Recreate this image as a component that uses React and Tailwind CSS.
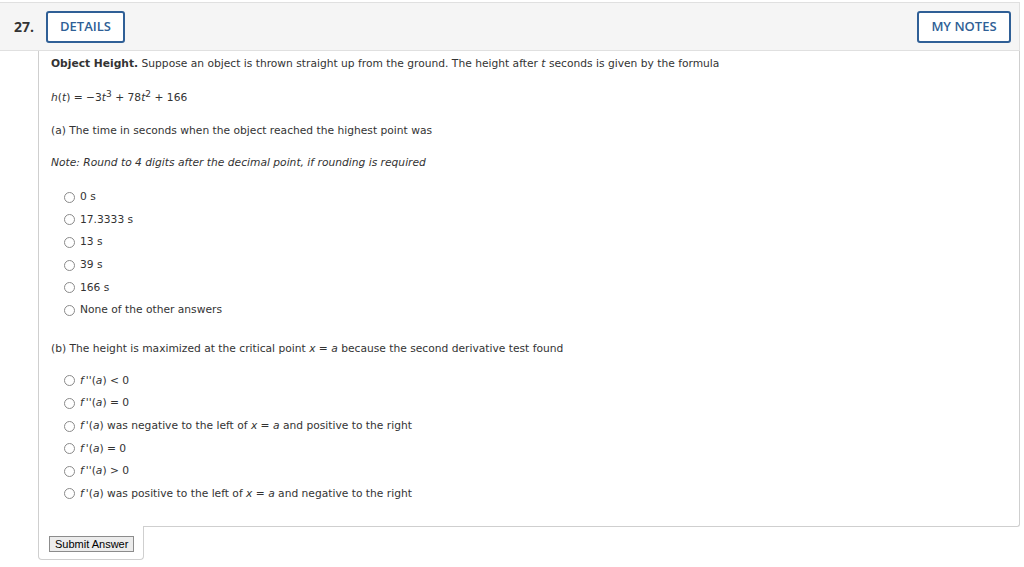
import React from 'react'

const body = { fontFamily: '"DejaVu Sans", Verdana, sans-serif' }

function Radio({ children }) {
  return (
    <label className="flex items-center h-[22.6px]">
      <span className="w-[11px] h-[11px] rounded-full border border-[#8a8a8a] bg-white shrink-0" />
      <span className="ml-[5px]">{children}</span>
    </label>
  )
}

const I = ({ children }) => <i>{children}</i>
const F = () => <i className="pr-[2px]">f</i>

export default function App() {
  const partA = ['0 s', '17.3333 s', '13 s', '39 s', '166 s', 'None of the other answers']
  const partB = [
    <><F />''(<I>a</I>) &lt; 0</>,
    <><F />''(<I>a</I>) = 0</>,
    <><F />'(<I>a</I>) was negative to the left of <I>x</I> = <I>a</I> and positive to the right</>,
    <><F />'(<I>a</I>) = 0</>,
    <><F />''(<I>a</I>) &gt; 0</>,
    <><F />'(<I>a</I>) was positive to the left of <I>x</I> = <I>a</I> and negative to the right</>,
  ]

  return (
    <div className="bg-white w-[1024px] h-[567px] overflow-hidden">
      {/* question header */}
      <div
        className="mt-[2px] w-[1020px] h-[49px] flex items-center justify-between bg-[#f5f5f5] border-t border-b border-r border-[#e0e0e0]"
        style={{ fontFamily: '"Open Sans", sans-serif' }}
      >
        <div className="flex items-center">
          <span className="ml-[14px] text-[14px] font-bold text-[#333]">27.</span>
          <button className="ml-[12px] w-[79px] h-[32px] rounded-[3px] border-2 border-[#2f5f96] bg-white text-[13px] font-semibold text-[#2f5f96]">
            DETAILS
          </button>
        </div>
        <button className="mr-[8px] w-[94px] h-[32px] rounded-[3px] border-2 border-[#2f5f96] bg-white text-[13px] font-semibold text-[#2f5f96]">
          MY NOTES
        </button>
      </div>

      {/* question body */}
      <div
        className="ml-[38px] w-[982px] h-[476px] border-l border-r border-b border-[#cfcfcf] rounded-br-[3px] pl-[12px] pt-[6px] text-[10.7px] text-[#333]"
        style={body}
      >
        <p className="leading-[14px]">
          <b>Object Height.</b> Suppose an object is thrown straight up from the ground. The height after <I>t</I> seconds is given by the formula
        </p>
        <p className="mt-[20px] leading-[14px]">
          <I>h</I>(<I>t</I>) = −3<I>t</I><sup className="text-[9px]">3</sup> + 78<I>t</I><sup className="text-[9px]">2</sup> + 166
        </p>
        <p className="mt-[19px] leading-[14px]">(a) The time in seconds when the object reached the highest point was</p>
        <p className="mt-[18px] leading-[14px] italic">Note: Round to 4 digits after the decimal point, if rounding is required</p>
        <div className="mt-[16px] ml-[13px]">
          {partA.map((t, i) => (
            <Radio key={i}>{t}</Radio>
          ))}
        </div>
        <p className="mt-[20px] leading-[14px]">
          (b) The height is maximized at the critical point <I>x</I> = <I>a</I> because the second derivative test found
        </p>
        <div className="mt-[14px] ml-[13px]">
          {partB.map((t, i) => (
            <Radio key={i}>{t}</Radio>
          ))}
        </div>
      </div>

      {/* submit tab */}
      <div className="ml-[38px] -mt-px w-[106px] h-[34px] bg-white border-l border-r border-b border-[#cfcfcf] rounded-b-[4px] pl-[10px] pt-[10px]">
        <button
          className="block h-[16px] px-[5px] bg-[#ececec] border border-[#8c8c8c] text-[11px] leading-[14px] text-black"
          style={{ fontFamily: '"Liberation Sans", Arial, sans-serif' }}
        >
          Submit Answer
        </button>
      </div>
    </div>
  )
}
